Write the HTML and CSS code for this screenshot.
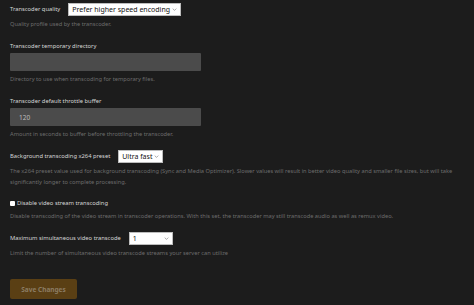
FILE: index.html
```html
<!DOCTYPE html>
<html lang="en">
<head>
    <meta charset="UTF-8">
    <title>Transcoder Settings</title>
    <link rel="stylesheet" href="styles.css">
</head>
<body>
    <form class="settings-form">
        <div class="form-group inline">
            <label for="quality">Transcoder quality</label>
            <span class="select-wrap">
                <select id="quality" class="select-wide">
                    <option>Prefer higher speed encoding</option>
                </select>
                <svg class="chevron" viewBox="0 0 8 5"><path d="M1 1l3 3 3-3"/></svg>
            </span>
        </div>
        <p class="help">Quality profile used by the transcoder.</p>

        <div class="form-group">
            <label for="tempDir">Transcoder temporary directory</label>
            <input type="text" id="tempDir">
        </div>
        <p class="help">Directory to use when transcoding for temporary files.</p>

        <div class="form-group">
            <label for="throttle">Transcoder default throttle buffer</label>
            <input type="text" id="throttle" value="120">
        </div>
        <p class="help">Amount in seconds to buffer before throttling the transcoder.</p>

        <div class="form-group inline">
            <label for="preset">Background transcoding x264 preset</label>
            <span class="select-wrap">
                <select id="preset" class="select-preset">
                    <option>Ultra fast</option>
                </select>
                <svg class="chevron" viewBox="0 0 8 5"><path d="M1 1l3 3 3-3"/></svg>
            </span>
        </div>
        <p class="help">The x264 preset value used for background transcoding (Sync and Media Optimizer). Slower values will result in better video quality and smaller file sizes, but will take significantly longer to complete processing.</p>

        <div class="form-group checkbox">
            <input type="checkbox" id="disableVideo">
            <label for="disableVideo">Disable video stream transcoding</label>
        </div>
        <p class="help">Disable transcoding of the video stream in transcoder operations. With this set, the transcoder may still transcode audio as well as remux video.</p>

        <div class="form-group inline">
            <label for="maxTranscode">Maximum simultaneous video transcode</label>
            <span class="select-wrap">
                <select id="maxTranscode" class="select-num">
                    <option>1</option>
                </select>
                <svg class="chevron" viewBox="0 0 8 5"><path d="M1 1l3 3 3-3"/></svg>
            </span>
        </div>
        <p class="help">Limit the number of simultaneous video transcode streams your server can utilize</p>

        <button type="submit" disabled>Save Changes</button>
    </form>
</body>
</html>
```

FILE: styles.css
```css
body {
    font-family: "Noto Sans", "Open Sans", sans-serif;
    background: #1c1c1c;
    color: #eeeeee;
    margin: 0;
    padding: 3px 10px;
}
.form-group.inline {
    display: flex;
    align-items: center;
    gap: 8px;
    height: 13px;
}
label {
    display: block;
    font-size: 5.8px;
    line-height: 13px;
    color: #d6d6d6;
}
.help {
    font-size: 5.7px;
    line-height: 11px;
    color: #6c6c6c;
    margin: 3px 0 10px;
}
.select-wrap {
    position: relative;
    display: inline-block;
    height: 13px;
}
select {
    appearance: none;
    -webkit-appearance: none;
    display: block;
    font-family: inherit;
    font-size: 7px;
    height: 13px;
    padding: 0 0 0 3px;
    border: 1px solid #bdbdbd;
    border-radius: 0;
    background: #ffffff;
    color: #111111;
}
.chevron {
    position: absolute;
    right: 4px;
    top: 5px;
    width: 5px;
    height: 3px;
    fill: none;
    stroke: #8a8a8a;
    stroke-width: 1.2;
}
.select-wide {
    width: 113px;
}
.select-preset {
    width: 45px;
}
.select-num {
    width: 44px;
}
input[type="text"] {
    display: block;
    width: 191px;
    height: 18px;
    box-sizing: border-box;
    border: none;
    border-radius: 1px;
    background: #4b4b4b;
    color: #bdbdbd;
    font-family: inherit;
    font-size: 6.5px;
    padding: 0 9px;
}
.form-group.checkbox {
    display: flex;
    align-items: center;
    gap: 2px;
    height: 10px;
}
.form-group.checkbox label {
    line-height: 10px;
}
input[type="checkbox"] {
    appearance: none;
    -webkit-appearance: none;
    width: 5px;
    height: 5px;
    margin: 0;
    background: #ffffff;
    border-radius: 1px;
}
button {
    display: block;
    margin-top: 20px;
    width: 67px;
    height: 20px;
    background: #5a3f14;
    color: #8b7c63;
    border: none;
    border-radius: 2px;
    font-family: inherit;
    font-size: 6.5px;
    font-weight: bold;
}
```
